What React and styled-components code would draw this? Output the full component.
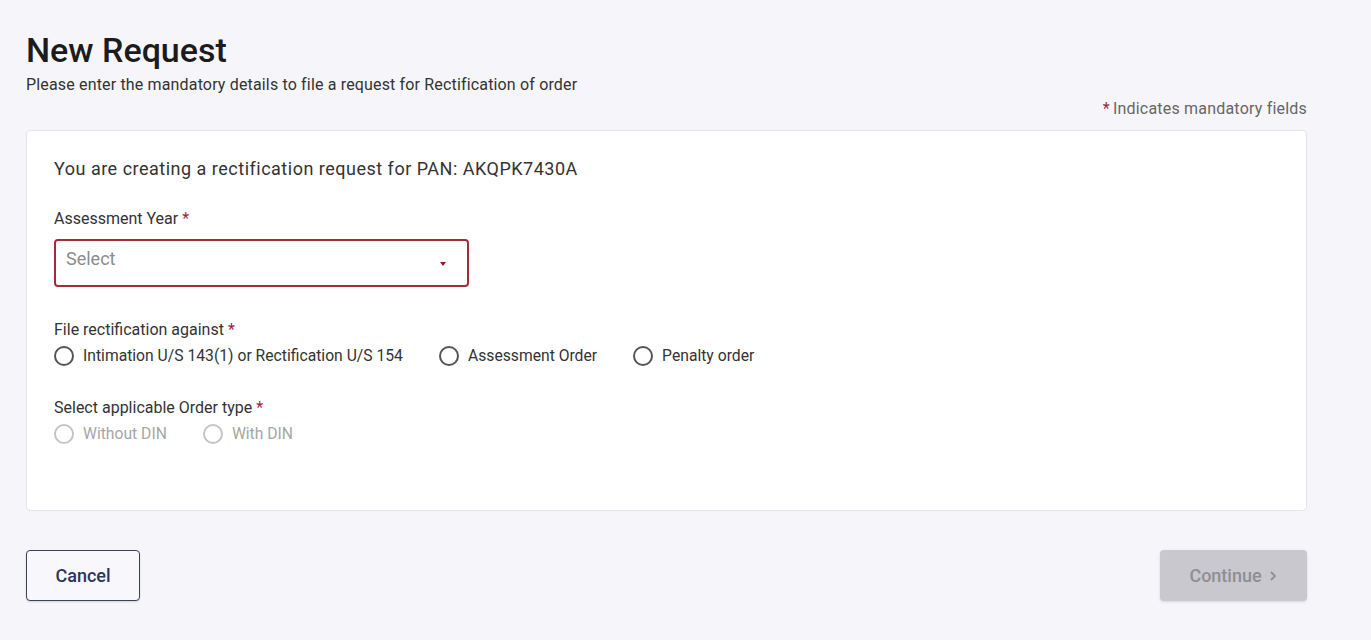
import React, { useState } from "react";
import styled, { createGlobalStyle } from "styled-components";

const GlobalStyle = createGlobalStyle`
  body {
    margin: 0;
    background: #f6f6fa;
    font-family: Roboto, "Liberation Sans", Arial, sans-serif;
    color: #333;
  }
`;

const Page = styled.div`
  padding: 30px 64px 40px 26px;
`;

const Title = styled.h1`
  font-size: 34px;
  line-height: 40px;
  font-weight: 500;
  color: #1c1c1c;
  margin: 0;
`;

const Subtitle = styled.p`
  font-size: 16px;
  line-height: 20px;
  letter-spacing: 0.16px;
  color: #333;
  margin: 5px 0 0;
`;

const Mandatory = styled.div`
  text-align: right;
  font-size: 16px;
  line-height: 20px;
  letter-spacing: 0.2px;
  color: #666;
  margin: 4px 0 11px;
`;

const Star = styled.span`
  color: #a0243a;
  margin-left: ${(p) => (p.$before ? "0" : "4px")};
  margin-right: ${(p) => (p.$before ? "3px" : "0")};
`;

const Card = styled.div`
  background: #fff;
  border: 1px solid #e4e4ea;
  border-radius: 4px;
  padding: 26px 27px 64px;
`;

const Intro = styled.div`
  font-size: 18px;
  line-height: 24px;
  letter-spacing: 0.5px;
  color: #333;
`;

const Label = styled.div`
  font-size: 16px;
  line-height: 20px;
  color: #333;
  margin-top: ${(p) => p.$gap}px;
`;

const SelectBox = styled.div`
  margin-top: 10px;
  width: 415px;
  height: 48px;
  box-sizing: border-box;
  border: 2px solid #a52a3a;
  border-radius: 4px;
  display: flex;
  align-items: flex-start;
  justify-content: space-between;
  padding: 6px 21px 0 10px;
  cursor: pointer;
`;

const Placeholder = styled.span`
  font-size: 18px;
  line-height: 24px;
  color: #8c8c8c;
`;

const Caret = styled.span`
  width: 0;
  height: 0;
  margin-top: 15px;
  border-left: 3.5px solid transparent;
  border-right: 3.5px solid transparent;
  border-top: 4px solid #8b1d2c;
`;

const RadioRow = styled.div`
  display: flex;
  align-items: center;
  gap: 36px;
  margin-top: 4px;
`;

const Option = styled.label`
  display: flex;
  align-items: center;
  gap: 9px;
  font-size: 15.7px;
  line-height: 24px;
  color: ${(p) => (p.$disabled ? "#a6a6a6" : "#333")};
  cursor: ${(p) => (p.$disabled ? "default" : "pointer")};
`;

const Circle = styled.span`
  width: 20px;
  height: 20px;
  box-sizing: border-box;
  border-radius: 50%;
  border: 2px solid ${(p) => (p.$disabled ? "#c4c4c4" : "#555")};
  display: flex;
  align-items: center;
  justify-content: center;

  &::after {
    content: "";
    width: 10px;
    height: 10px;
    border-radius: 50%;
    background: ${(p) => (p.$checked ? "#2c355a" : "transparent")};
  }
`;

const Footer = styled.div`
  display: flex;
  justify-content: space-between;
  margin-top: 39px;
`;

const CancelButton = styled.button`
  width: 114px;
  height: 51px;
  background: #f8f8fc;
  border: 1px solid #3b4060;
  border-radius: 4px;
  box-shadow: 0 1px 2px rgba(0, 0, 0, 0.15);
  font-family: inherit;
  font-size: 18px;
  font-weight: 500;
  color: #2c355a;
  cursor: pointer;
`;

const ContinueButton = styled.button`
  width: 147px;
  height: 51px;
  background: #c9c8ce;
  border: none;
  border-radius: 4px;
  box-shadow: 0 1px 3px rgba(0, 0, 0, 0.12);
  font-family: inherit;
  font-size: 18px;
  font-weight: 500;
  color: #8e8e94;
  display: flex;
  align-items: center;
  justify-content: center;
  gap: 6px;
  cursor: not-allowed;
`;

const Radio = ({ label, disabled, checked, onClick }) => (
  <Option $disabled={disabled} onClick={disabled ? undefined : onClick}>
    <Circle $disabled={disabled} $checked={checked} />
    {label}
  </Option>
);

export default function App() {
  const [against, setAgainst] = useState(null);
  const [orderType, setOrderType] = useState(null);
  const againstOptions = [
    "Intimation U/S 143(1) or Rectification U/S 154",
    "Assessment Order",
    "Penalty order",
  ];

  return (
    <Page>
      <GlobalStyle />
      <Title>New Request</Title>
      <Subtitle>Please enter the mandatory details to file a request for Rectification of order</Subtitle>
      <Mandatory>
        <Star $before>*</Star>Indicates mandatory fields
      </Mandatory>
      <Card>
        <Intro>You are creating a rectification request for PAN: AKQPK7430A</Intro>
        <Label $gap={28}>
          Assessment Year<Star>*</Star>
        </Label>
        <SelectBox>
          <Placeholder>Select</Placeholder>
          <Caret />
        </SelectBox>
        <Label $gap={33}>
          File rectification against<Star>*</Star>
        </Label>
        <RadioRow>
          {againstOptions.map((o) => (
            <Radio key={o} label={o} checked={against === o} onClick={() => setAgainst(o)} />
          ))}
        </RadioRow>
        <Label $gap={30}>
          Select applicable Order type<Star>*</Star>
        </Label>
        <RadioRow>
          {["Without DIN", "With DIN"].map((o) => (
            <Radio
              key={o}
              label={o}
              disabled={!against}
              checked={orderType === o}
              onClick={() => setOrderType(o)}
            />
          ))}
        </RadioRow>
      </Card>
      <Footer>
        <CancelButton>Cancel</CancelButton>
        <ContinueButton disabled>
          Continue
          <svg width="10" height="12" viewBox="0 0 10 12" fill="none">
            <path d="M3 2l4 4-4 4" stroke="#8e8e94" strokeWidth="1.8" />
          </svg>
        </ContinueButton>
      </Footer>
    </Page>
  );
}
